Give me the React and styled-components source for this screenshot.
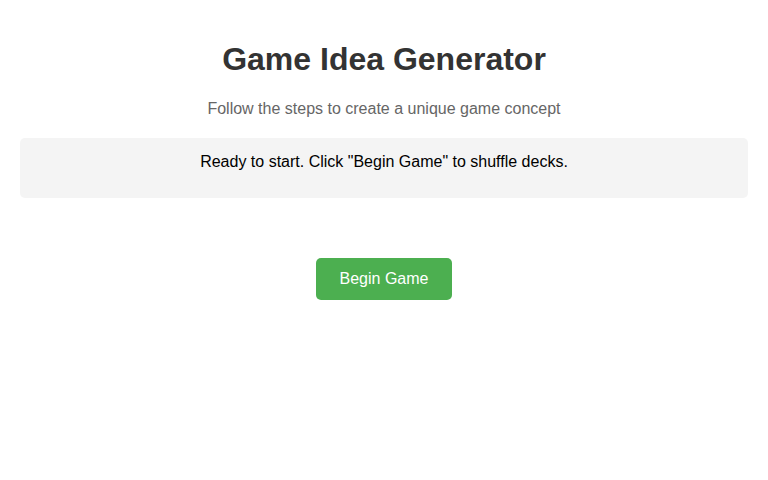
import React from "react";
import styled, { createGlobalStyle } from "styled-components";

const GlobalStyle = createGlobalStyle`
  body {
    margin: 0;
    padding: 20px;
    background: #ffffff;
    font-family: "Liberation Sans", Arial, sans-serif;
  }
`;

const Page = styled.div`
  display: flex;
  flex-direction: column;
  align-items: stretch;
  text-align: center;
`;

const Title = styled.h1`
  font-size: 32px;
  font-weight: 700;
  color: #333333;
  margin: 21.44px 0;
`;

const Subtitle = styled.p`
  font-size: 16px;
  color: #666666;
  margin: 0 0 20px;
`;

const StatusBox = styled.div`
  box-sizing: border-box;
  min-height: 60px;
  padding: 15px;
  background: #f4f4f4;
  border-radius: 5px;
  font-size: 16px;
  color: #000000;
`;

const Actions = styled.div`
  display: flex;
  justify-content: center;
  margin-top: 60px;
`;

const Button = styled.button`
  background: #4caf50;
  color: #ffffff;
  border: none;
  border-radius: 5px;
  padding: 12px 24px;
  font-family: "Liberation Sans", Arial, sans-serif;
  font-size: 16px;
  line-height: normal;
  cursor: pointer;
`;

export default function App() {
  return (
    <>
      <GlobalStyle />
      <Page>
        <Title>Game Idea Generator</Title>
        <Subtitle>Follow the steps to create a unique game concept</Subtitle>
        <StatusBox>Ready to start. Click "Begin Game" to shuffle decks.</StatusBox>
        <Actions>
          <Button type="button">Begin Game</Button>
        </Actions>
      </Page>
    </>
  );
}
